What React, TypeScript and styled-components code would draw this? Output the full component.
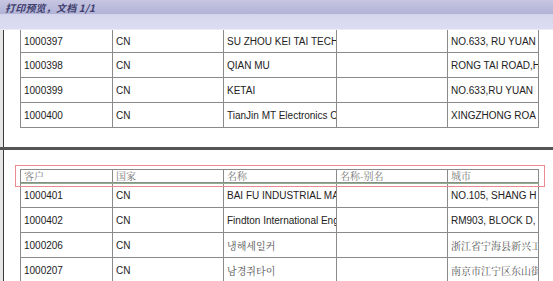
import React from "react";
import styled, { createGlobalStyle } from "styled-components";

const Global = createGlobalStyle`
  html, body { margin: 0; padding: 0; background: #fff; }
  * { box-sizing: border-box; }
`;

const Frame = styled.div`
  width: 553px;
  height: 281px;
  overflow: hidden;
  display: flex;
  flex-direction: column;
  background: #fff;
`;

const TitleBar = styled.div`
  height: 15px;
  flex: none;
  display: flex;
  align-items: center;
  padding-left: 5px;
  background: linear-gradient(#c6c6e2, #b2b2d6);
  border-bottom: 1px solid #d4d4ec;
  font-family: "Noto Sans CJK SC", "Liberation Sans", sans-serif;
  font-size: 10px;
  font-weight: 700;
  font-style: italic;
  color: #3e3e6e;
  letter-spacing: 0.2px;
`;

const Toolbar = styled.div`
  height: 15px;
  flex: none;
  background: linear-gradient(#d6d6ee, #dcdcf2);
  border-bottom: 1px solid #ececf8;
`;

const Viewport = styled.div`
  flex: 1;
  overflow: hidden;
  background: #e6e6e6;
`;

const Scroller = styled.div`
  margin-top: -2px;
  display: flex;
  flex-direction: column;
`;

const Page = styled.div<{ $top: number; $bottom: number }>`
  margin-left: 3px;
  border-left: 1px solid #3a3a3a;
  background: #fff;
  padding: ${(p) => p.$top}px 0 ${(p) => p.$bottom}px 16px;
`;

const Divider = styled.div`
  height: 3px;
  background: #555;
`;

const Grid = styled.div`
  width: 518px;
  display: grid;
  grid-template-columns: 92px 111px 113px 111px 91px;
  border-left: 1px solid #8a8a8a;
`;

const HeaderWrap = styled.div`
  position: relative;
  &::after {
    content: "";
    position: absolute;
    left: -5px;
    width: 528px;
    top: -4px;
    bottom: -4px;
    border: 1px solid #ec8a94;
    pointer-events: none;
  }
`;

const HeadCell = styled.div`
  height: 14px;
  border-top: 1px solid #8a8a8a;
  border-right: 1px solid #8a8a8a;
  border-bottom: 1px solid #8a8a8a;
  box-shadow: 0 1px 0 #8fb08f;
  padding-left: 3px;
  font-family: "Noto Serif CJK SC", "Noto Sans CJK SC", serif;
  font-size: 10px;
  line-height: 12px;
  color: #7a7a7a;
  white-space: nowrap;
  overflow: hidden;
`;

const Cell = styled.div<{ $cjk?: "kr" | "sc"; $first?: boolean }>`
  height: 25px;
  border-right: 1px solid #8a8a8a;
  border-bottom: 1px solid #8a8a8a;
  border-top: ${(p) => (p.$first ? "1px solid #8a8a8a" : "none")};
  display: flex;
  align-items: center;
  padding-left: 3px;
  padding-top: 1px;
  white-space: nowrap;
  overflow: hidden;
  font-size: 10px;
  font-family: ${(p) =>
    p.$cjk === "kr"
      ? '"Noto Serif CJK KR", "Noto Sans CJK KR", serif'
      : p.$cjk === "sc"
      ? '"Noto Serif CJK SC", "Noto Sans CJK SC", serif'
      : '"Liberation Sans", Arial, sans-serif'};
  color: ${(p) => (p.$cjk ? "#555" : "#222")};
`;

type Row = { id: string; country: string; name: string; alias: string; city: string; nameCjk?: "kr" | "sc"; cityCjk?: "kr" | "sc" };

const page1: Row[] = [
  { id: "1000397", country: "CN", name: "SU ZHOU KEI TAI TECH", alias: "", city: "NO.633, RU YUAN" },
  { id: "1000398", country: "CN", name: "QIAN MU", alias: "", city: "RONG TAI ROAD,H" },
  { id: "1000399", country: "CN", name: "KETAI", alias: "", city: "NO.633,RU YUAN" },
  { id: "1000400", country: "CN", name: "TianJin MT Electronics C", alias: "", city: "XINGZHONG ROA" },
];

const page2: Row[] = [
  { id: "1000401", country: "CN", name: "BAI FU INDUSTRIAL MA", alias: "", city: "NO.105, SHANG H" },
  { id: "1000402", country: "CN", name: "Findton International Eng", alias: "", city: "RM903, BLOCK D," },
  { id: "1000206", country: "CN", name: "냉해세일커", alias: "", city: "浙江省宁海县新兴工", nameCjk: "kr", cityCjk: "sc" },
  { id: "1000207", country: "CN", name: "남경쥐타이", alias: "", city: "南京市江宁区东山街", nameCjk: "kr", cityCjk: "sc" },
];

const headers = ["客户", "国家", "名称", "名称-别名", "城市"];

function Rows({ rows, first }: { rows: Row[]; first?: boolean }) {
  return (
    <Grid>
      {rows.map((r, i) => (
        <React.Fragment key={r.id}>
          <Cell $first={first && i === 0}>{r.id}</Cell>
          <Cell $first={first && i === 0}>{r.country}</Cell>
          <Cell $first={first && i === 0} $cjk={r.nameCjk}>{r.name}</Cell>
          <Cell $first={first && i === 0}>{r.alias}</Cell>
          <Cell $first={first && i === 0} $cjk={r.cityCjk}>{r.city}</Cell>
        </React.Fragment>
      ))}
    </Grid>
  );
}

export default function App() {
  return (
    <Frame>
      <Global />
      <TitleBar>打印预览，文档 1/1</TitleBar>
      <Toolbar />
      <Viewport>
        <Scroller>
          <Page $top={0} $bottom={19}>
            <Rows rows={page1} first />
          </Page>
          <Divider />
          <Page $top={19} $bottom={40}>
            <HeaderWrap>
              <Grid>
                {headers.map((h) => (
                  <HeadCell key={h}>{h}</HeadCell>
                ))}
              </Grid>
            </HeaderWrap>
            <Rows rows={page2} />
          </Page>
        </Scroller>
      </Viewport>
    </Frame>
  );
}
